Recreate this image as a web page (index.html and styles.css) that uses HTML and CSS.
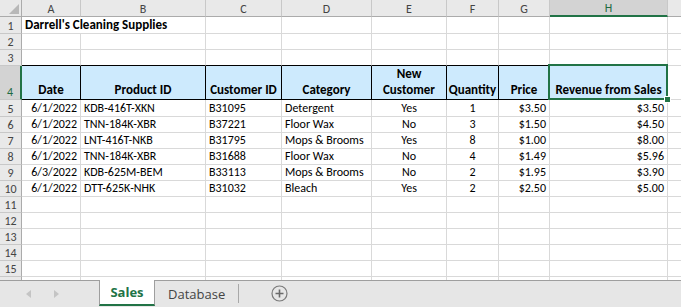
FILE: index.html
```html
<!DOCTYPE html>
<html>
<head>
<meta charset="utf-8">
<link rel="stylesheet" href="styles.css">
</head>
<body>
<div class="sheet">
  <div class="grid">
    <div class="hd corner"><span class="tri"></span></div>
    <div class="hd col">A</div>
    <div class="hd col">B</div>
    <div class="hd col">C</div>
    <div class="hd col">D</div>
    <div class="hd col">E</div>
    <div class="hd col">F</div>
    <div class="hd col">G</div>
    <div class="hd col selcol">H</div>
    <div class="hd col last"></div>

    <div class="hd rn">1</div>
    <div class="c title">Darrell's Cleaning Supplies</div>
    <div class="c"></div><div class="c"></div><div class="c"></div><div class="c"></div><div class="c"></div><div class="c"></div><div class="c last"></div>

    <div class="hd rn">2</div>
    <div class="c"></div><div class="c"></div><div class="c"></div><div class="c"></div><div class="c"></div><div class="c"></div><div class="c"></div><div class="c"></div><div class="c last"></div>

    <div class="hd rn">3</div>
    <div class="c bb"></div><div class="c bb"></div><div class="c bb"></div><div class="c bb"></div><div class="c bb"></div><div class="c bb"></div><div class="c bb"></div><div class="c"></div><div class="c last"></div>

    <div class="hd rn selrow">4</div>
    <div class="c th">Date</div>
    <div class="c th">Product ID</div>
    <div class="c th">Customer ID</div>
    <div class="c th">Category</div>
    <div class="c th wrap">New Customer</div>
    <div class="c th">Quantity</div>
    <div class="c th">Price</div>
    <div class="c th thh">Revenue from Sales</div>
    <div class="c last"></div>

    <div class="hd rn">5</div>
    <div class="c r">6/1/2022</div><div class="c">KDB-416T-XKN</div><div class="c">B31095</div><div class="c">Detergent</div><div class="c m">Yes</div><div class="c m">1</div><div class="c r">$3.50</div><div class="c r">$3.50</div><div class="c last"></div>

    <div class="hd rn">6</div>
    <div class="c r">6/1/2022</div><div class="c">TNN-184K-XBR</div><div class="c">B37221</div><div class="c">Floor Wax</div><div class="c m">No</div><div class="c m">3</div><div class="c r">$1.50</div><div class="c r">$4.50</div><div class="c last"></div>

    <div class="hd rn">7</div>
    <div class="c r">6/1/2022</div><div class="c">LNT-416T-NKB</div><div class="c">B31795</div><div class="c">Mops &amp; Brooms</div><div class="c m">Yes</div><div class="c m">8</div><div class="c r">$1.00</div><div class="c r">$8.00</div><div class="c last"></div>

    <div class="hd rn">8</div>
    <div class="c r">6/1/2022</div><div class="c">TNN-184K-XBR</div><div class="c">B31688</div><div class="c">Floor Wax</div><div class="c m">No</div><div class="c m">4</div><div class="c r">$1.49</div><div class="c r">$5.96</div><div class="c last"></div>

    <div class="hd rn">9</div>
    <div class="c r">6/3/2022</div><div class="c">KDB-625M-BEM</div><div class="c">B33113</div><div class="c">Mops &amp; Brooms</div><div class="c m">No</div><div class="c m">2</div><div class="c r">$1.95</div><div class="c r">$3.90</div><div class="c last"></div>

    <div class="hd rn">10</div>
    <div class="c r">6/1/2022</div><div class="c">DTT-625K-NHK</div><div class="c">B31032</div><div class="c">Bleach</div><div class="c m">Yes</div><div class="c m">2</div><div class="c r">$2.50</div><div class="c r">$5.00</div><div class="c last"></div>

    <div class="hd rn">11</div>
    <div class="c"></div><div class="c"></div><div class="c"></div><div class="c"></div><div class="c"></div><div class="c"></div><div class="c"></div><div class="c"></div><div class="c last"></div>
    <div class="hd rn">12</div>
    <div class="c"></div><div class="c"></div><div class="c"></div><div class="c"></div><div class="c"></div><div class="c"></div><div class="c"></div><div class="c"></div><div class="c last"></div>
    <div class="hd rn">13</div>
    <div class="c"></div><div class="c"></div><div class="c"></div><div class="c"></div><div class="c"></div><div class="c"></div><div class="c"></div><div class="c"></div><div class="c last"></div>
    <div class="hd rn">14</div>
    <div class="c"></div><div class="c"></div><div class="c"></div><div class="c"></div><div class="c"></div><div class="c"></div><div class="c"></div><div class="c"></div><div class="c last"></div>
    <div class="hd rn">15</div>
    <div class="c"></div><div class="c"></div><div class="c"></div><div class="c"></div><div class="c"></div><div class="c"></div><div class="c"></div><div class="c"></div><div class="c last"></div>
    <div class="hd rn"></div>
    <div class="c"></div><div class="c"></div><div class="c"></div><div class="c"></div><div class="c"></div><div class="c"></div><div class="c"></div><div class="c"></div><div class="c last"></div>
  </div>
  <div class="selbox"><span class="handle"></span></div>
</div>
<div class="tabs">
  <div class="nav">
    <span class="arrow left"></span>
    <span class="arrow right"></span>
  </div>
  <div class="tab active">Sales</div>
  <div class="tab">Database</div>
  <div class="sep"></div>
  <div class="add">
    <svg width="17" height="17" viewBox="0 0 17 17">
      <circle cx="8.5" cy="8.5" r="7.5" fill="none" stroke="#7a7a7a" stroke-width="1.2"/>
      <path d="M8.5 4.5v8M4.5 8.5h8" stroke="#6a6a6a" stroke-width="1.6"/>
    </svg>
  </div>
</div>
</body>
</html>
```

FILE: styles.css
```css
html, body {
  margin: 0;
  padding: 0;
  background: #ffffff;
  overflow: hidden;
}
body {
  width: 681px;
  height: 307px;
  font-family: "Carlito", "Lato", "Liberation Sans", sans-serif;
  font-size: 12px;
  color: #000;
}
.sheet {
  position: relative;
  height: 280px;
  overflow: hidden;
}
.grid {
  display: grid;
  grid-template-columns: 22px 59px 125px 76px 90px 75px 52px 51px 118px 1fr;
  grid-template-rows: 17px 17px 16px 16px 34px 17px repeat(11, 16px);
}
.hd {
  box-sizing: border-box;
  background: #e9e9e9;
  color: #444;
  border-right: 1px solid #c8c8c8;
  border-bottom: 1px solid #c8c8c8;
  display: flex;
  align-items: center;
  justify-content: center;
  font-size: 12px;
  line-height: 1;
}
.corner {
  position: relative;
  border-bottom-color: #ababab;
  border-right-color: #ababab;
}
.tri {
  position: absolute;
  right: 2px;
  bottom: 2px;
  width: 0;
  height: 0;
  border-left: 10px solid transparent;
  border-bottom: 10px solid #b8b8b8;
}
.col {
  border-bottom-color: #ababab;
  padding-top: 1px;
}
.col.last {
  border-right: none;
}
.selcol {
  background: #d3d3d3;
  color: #1e6b41;
  border-bottom: 2px solid #217346;
}
.rn {
  border-right-color: #ababab;
  align-items: flex-end;
  padding-bottom: 1px;
  font-size: 12px;
}
.selrow {
  background: #d3d3d3;
  color: #1e6b41;
  border-right: 2px solid #217346;
}
.c {
  box-sizing: border-box;
  border-right: 1px solid #d9d9d9;
  border-bottom: 1px solid #d9d9d9;
  padding: 0 3px 1px 3px;
  display: flex;
  align-items: flex-end;
  white-space: nowrap;
  line-height: 14px;
}
.c.last {
  border-right: none;
}
.title {
  grid-column: span 2;
  font-weight: bold;
  font-size: 13px;
}
.bb {
  border-bottom-color: #000;
}
.th {
  background: #cdeafd;
  font-weight: bold;
  font-size: 13px;
  justify-content: center;
  text-align: center;
  border-right-color: #000;
  border-bottom-color: #000;
  padding: 0 0 1px 0;
  line-height: 16px;
}
.th.wrap {
  white-space: normal;
}
.thh {
  border-right-color: #d9d9d9;
  border-bottom-color: #d9d9d9;
}
.r {
  justify-content: flex-end;
}
.m {
  justify-content: center;
}
.selbox {
  position: absolute;
  left: 548px;
  top: 64px;
  width: 116px;
  height: 32px;
  border: 2px solid #217346;
}
.handle {
  position: absolute;
  right: -5px;
  bottom: -5px;
  width: 5px;
  height: 5px;
  background: #217346;
  border: 1px solid #fff;
}
.tabs {
  box-sizing: border-box;
  height: 27px;
  background: #e6e6e6;
  border-top: 1px solid #9e9e9e;
  display: flex;
  align-items: flex-start;
  font-family: "Segoe UI", "Open Sans", "Liberation Sans", sans-serif;
}
.nav {
  width: 99px;
  height: 26px;
  display: flex;
  align-items: center;
  gap: 23px;
  padding-left: 26px;
  box-sizing: border-box;
}
.arrow {
  width: 0;
  height: 0;
  border-top: 4px solid transparent;
  border-bottom: 4px solid transparent;
}
.arrow.left {
  border-right: 5px solid #c4c4c4;
}
.arrow.right {
  border-left: 5px solid #c4c4c4;
}
.tab {
  box-sizing: border-box;
  height: 25px;
  padding: 0 13px;
  display: flex;
  align-items: center;
  font-size: 13px;
  color: #444;
}
.tab.active {
  margin-top: -1px;
  height: 26px;
  width: 56px;
  justify-content: center;
  padding: 0;
  background: #fff;
  border-left: 1px solid #9e9e9e;
  border-right: 1px solid #9e9e9e;
  border-bottom: 2px solid #217346;
  color: #217346;
  font-weight: bold;
}
.sep {
  width: 1px;
  height: 19px;
  margin-top: 3px;
  background: #a8a8a8;
}
.add {
  margin-left: 32px;
  margin-top: 4px;
  display: flex;
}
```
